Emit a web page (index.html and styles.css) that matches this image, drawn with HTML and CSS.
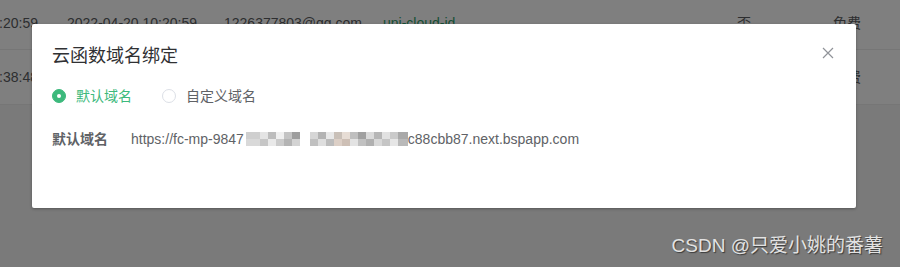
FILE: index.html
```html
<!DOCTYPE html>
<html lang="zh">
<head>
<meta charset="utf-8">
<title>云函数域名绑定</title>
<link rel="stylesheet" href="styles.css">
</head>
<body>
<div class="table">
  <div class="row row-first">
    <div class="cell c1">2022-04-20 10:20:59</div>
    <div class="cell c2">2022-04-20 10:20:59</div>
    <div class="cell c3">1226377803@qq.com</div>
    <div class="cell c4 link">uni-cloud-id</div>
    <div class="cell c5">否</div>
    <div class="cell c6">免费</div>
  </div>
  <div class="row">
    <div class="cell c1">2022-04-19 16:38:48</div>
    <div class="cell c2">2022-04-19 16:38:48</div>
    <div class="cell c3">1226377803@qq.com</div>
    <div class="cell c4 link">uni-cloud-id</div>
    <div class="cell c5">否</div>
    <div class="cell c6">免费</div>
  </div>
</div>
<div class="mask"></div>
<div class="dialog">
  <div class="dialog-header">
    <span class="dialog-title">云函数域名绑定</span>
    <button class="close" type="button" aria-label="关闭">
      <svg width="16" height="16" viewBox="0 0 16 16"><path d="M3 3 L13 13 M13 3 L3 13" stroke="#909399" stroke-width="1.2" fill="none"/></svg>
    </button>
  </div>
  <div class="dialog-body">
    <div class="radio-group">
      <label class="radio checked"><span class="radio-input"></span><span class="radio-label">默认域名</span></label>
      <label class="radio"><span class="radio-input"></span><span class="radio-label">自定义域名</span></label>
    </div>
    <div class="field">
      <span class="field-label">默认域名</span>
      <span class="field-value">https://fc-mp-9847<span class="mosaic"></span>c88cbb87.next.bspapp.com</span>
    </div>
  </div>
</div>
<div class="watermark">CSDN @只爱小姚的番薯</div>
</body>
</html>
```

FILE: styles.css
```css
html, body {
  margin: 0;
  padding: 0;
}
body {
  width: 900px;
  height: 267px;
  overflow: hidden;
  position: relative;
  background: #f4f4f4;
  font-family: "Liberation Sans", Arial, "Noto Sans CJK SC", sans-serif;
}
.table {
  background: #fff;
}
.row {
  display: flex;
  align-items: center;
  height: 54px;
  border-bottom: 1px solid #ececec;
  font-size: 14px;
  color: #5a5c60;
}
.row-first {
  height: 50px;
  padding-bottom: 0;
  box-sizing: border-box;
  align-items: flex-start;
  padding-top: 15px;
}
.cell {
  white-space: nowrap;
  overflow: hidden;
  box-sizing: border-box;
  line-height: 16px;
}
.c1 {
  width: 67px;
  display: flex;
  justify-content: flex-end;
  padding-right: 29px;
}
.c2 { width: 157px; }
.c3 { width: 159px; }
.c4 { width: 354px; }
.c5 { width: 96px; }
.c6 { flex: 1; }
.link { color: #2f9e6a; }
.mask {
  position: absolute;
  inset: 0;
  background: rgba(0, 0, 0, 0.5);
}
.dialog {
  position: absolute;
  left: 32px;
  top: 24px;
  width: 824px;
  height: 184px;
  box-sizing: border-box;
  background: #fff;
  border-radius: 2px;
  box-shadow: 0 1px 3px rgba(0, 0, 0, 0.3);
}
.dialog-header {
  display: flex;
  justify-content: space-between;
  align-items: flex-start;
  padding: 20px 20px 10px;
}
.dialog-title {
  font-size: 18px;
  line-height: 24px;
  color: #303133;
}
.close {
  width: 16px;
  height: 16px;
  padding: 0;
  margin-top: 1px;
  border: 0;
  background: none;
  display: block;
}
.close svg { display: block; }
.dialog-body {
  padding: 10px 20px 0;
}
.radio-group {
  display: flex;
  align-items: center;
  height: 16px;
}
.radio {
  display: flex;
  align-items: center;
  margin-right: 30px;
  font-size: 14px;
  line-height: 16px;
  color: #606266;
}
.radio-input {
  width: 14px;
  height: 14px;
  box-sizing: border-box;
  border: 1px solid #dcdfe6;
  border-radius: 50%;
  background: #fff;
  position: relative;
}
.radio.checked .radio-input {
  border-color: #3cb97c;
  background: #3cb97c;
}
.radio.checked .radio-input::after {
  content: "";
  position: absolute;
  left: 50%;
  top: 50%;
  width: 4px;
  height: 4px;
  margin: -2px 0 0 -2px;
  border-radius: 50%;
  background: #fff;
}
.radio.checked .radio-label { color: #3cb97c; }
.radio-label { margin-left: 10px; }
.field {
  display: flex;
  align-items: center;
  margin-top: 25px;
  line-height: 20px;
  font-size: 14px;
  color: #606266;
}
.field-label {
  width: 79px;
  font-weight: bold;
  flex: none;
}
.field-value {
  display: flex;
  align-items: center;
  white-space: nowrap;
}
.mosaic {
  display: inline-block;
  width: 162px;
  height: 14px;
  margin-left: 2px;
  background:
    linear-gradient(90deg,
      #cfcfcf 0 14px, #e4e4e4 14px 22px, #bdbdbd 22px 30px, #f0f0f0 30px 38px,
      #c4c4c4 38px 46px, #9e9e9e 46px 54px, #fff 54px 64px, #d6d6d6 64px 72px,
      #b3b3b3 72px 80px, #e8e8e8 80px 88px, #c9c0b8 88px 96px, #e7ddd5 96px 104px,
      #bfbfbf 104px 112px, #a0a0a0 112px 120px, #dadada 120px 128px, #b6b6b6 128px 136px,
      #e2e2e2 136px 144px, #cacaca 144px 152px, #a9a9a9 152px 162px) top / 100% 7px no-repeat,
    linear-gradient(90deg,
      #d9d9d9 0 14px, #c6c6c6 14px 22px, #e9e9e9 22px 30px, #cbcbcb 30px 38px,
      #b4b4b4 38px 46px, #d3d3d3 46px 54px, #fff 54px 64px, #c0c0c0 64px 72px,
      #dedede 72px 80px, #bcbcbc 80px 88px, #dccfc6 88px 96px, #cdbfb5 96px 104px,
      #e3e3e3 104px 112px, #c1c1c1 112px 120px, #b0b0b0 120px 128px, #d8d8d8 128px 136px,
      #c5c5c5 136px 144px, #e6e6e6 144px 152px, #b9b9b9 152px 162px) bottom / 100% 7px no-repeat;
}
.watermark {
  position: absolute;
  right: 17px;
  bottom: 10px;
  font-size: 19px;
  line-height: 22px;
  color: #e2e2e2;
  text-shadow: 1px 1px 1px #3a3a3a;
  white-space: nowrap;
}
```
